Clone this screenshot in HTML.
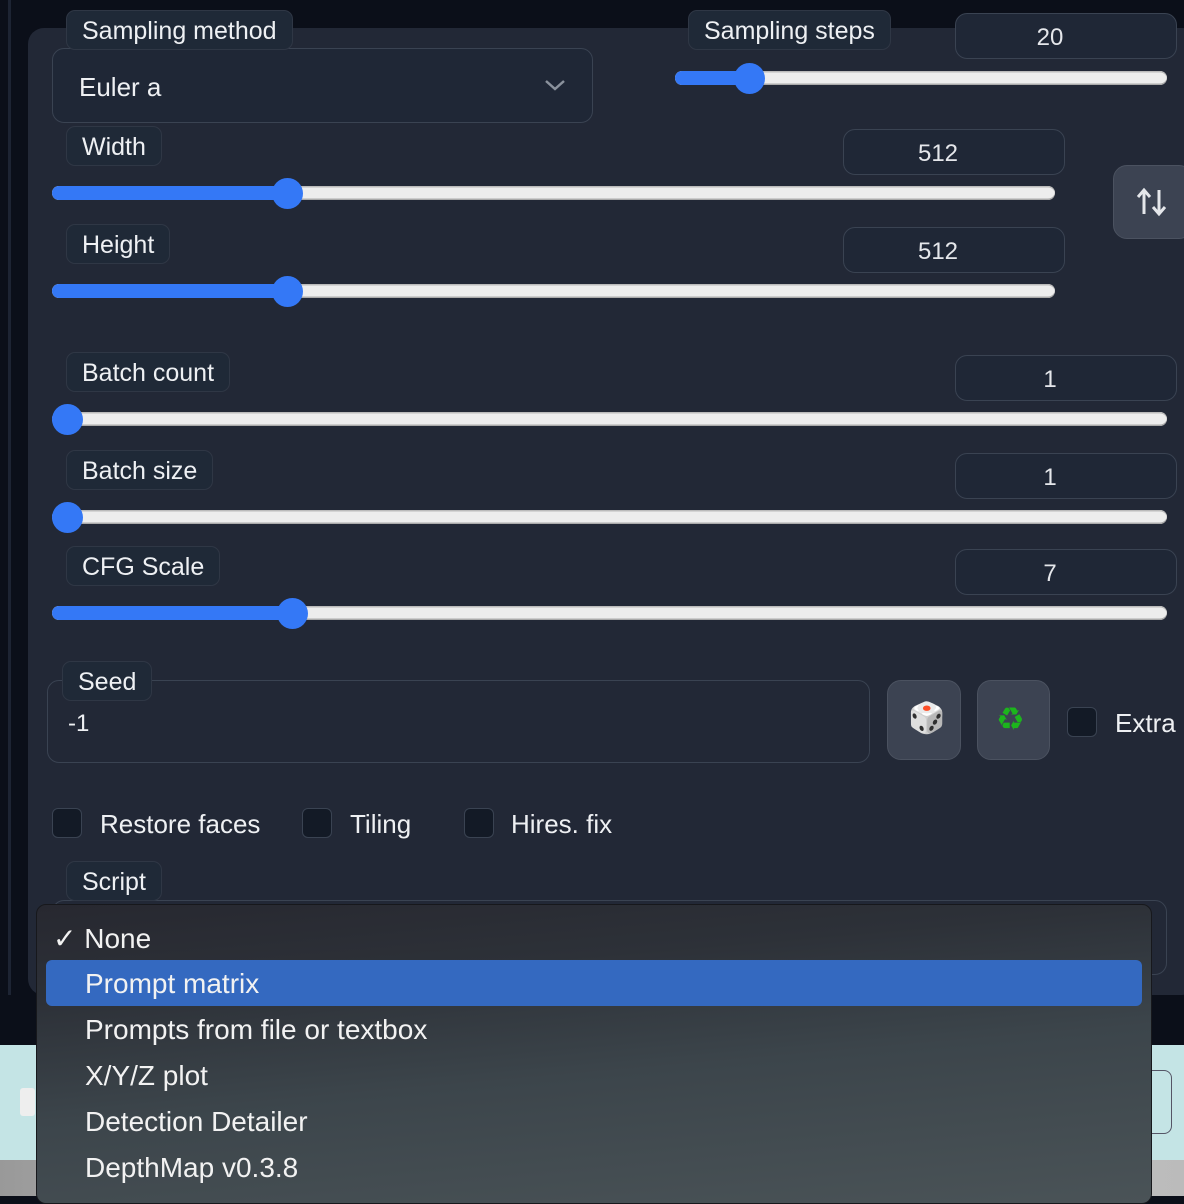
<!DOCTYPE html>
<html><head><meta charset="utf-8"><style>
*{box-sizing:border-box;margin:0;padding:0}
body{width:1184px;height:1196px;overflow:hidden;background:#0b0f19;font-family:"Liberation Sans","DejaVu Sans",sans-serif;color:#e5e7eb;position:relative}
.a{position:absolute}
.panel{left:28px;top:28px;width:1170px;height:967px;background:#222836;border-radius:16px}
.lbl{position:absolute;height:40px;background:#1f2937;border:1.5px solid #2f3745;border-radius:9px;font-size:25px;line-height:40px;padding:0 15px;color:#eef0f3;z-index:2}
.box{position:absolute;border:1.5px solid #3a4352;border-radius:12px;background:#1f2736}
.num{position:absolute;height:46px;border:1.5px solid #3a4352;border-radius:12px;background:#1f2736;text-align:center;font-size:24px;line-height:48px;padding-right:32px}
.tr{position:absolute;height:14px;background:#ededed;border-radius:7px;box-shadow:inset 0 -1.5px 0 #aaa,inset 0 1.5px 0 #bbb}
.fill{position:absolute;left:0;top:0;height:14px;background:#3478f6;border-radius:7px}
.th{position:absolute;width:31px;height:31px;border-radius:50%;background:#3478f6;top:-8.5px}
.cb{position:absolute;width:30px;height:30px;border:1.5px solid #3a4352;border-radius:6px;background:#131a26}
.t{position:absolute;font-size:26px;color:#eef0f3}
.btn{position:absolute;border:1.5px solid #4b5260;border-radius:14px;background:#3c4352}
.menu{left:36px;top:904px;width:1116px;height:300px;border-radius:10px;border:1.5px solid #17181c;background:linear-gradient(175deg,#272830 0%,#2d3138 25%,#3c454b 55%,#4a5357 100%);z-index:5}
.mi{position:absolute;left:48px;font-size:28px;color:#f2f2f2}
</style></head><body>
<div class="a" style="left:8px;top:0;width:3px;height:1045px;background:#1d2433"></div>
<div class="a panel"></div>
<div class="a" style="left:0;top:995px;width:1184px;height:50px;background:#0b0f19"></div>
<div class="a" style="left:0;top:1045px;width:1184px;height:115px;background:#c4e4e5"></div>
<div class="a" style="left:20px;top:1088px;width:15px;height:28px;background:#eee;border-radius:3px"></div>
<div class="a" style="left:1120px;top:1070px;width:52px;height:64px;border:1.5px solid #556;border-radius:8px"></div>
<div class="a" style="left:0;top:1160px;width:1184px;height:36px;background:linear-gradient(90deg,#999,#ccc 40%,#bbb)"></div>

<div class="lbl" style="left:66px;top:10px">Sampling method</div>
<div class="box" style="left:52px;top:48px;width:541px;height:75px"></div>
<div class="t" style="left:79px;top:72px;font-size:26px">Euler a</div>
<svg class="a" style="left:544px;top:78px" width="22" height="14"><path d="M2 3l9 8 9-8" stroke="#8a919c" stroke-width="2.5" fill="none"/></svg>

<div class="lbl" style="left:688px;top:10px">Sampling steps</div>
<div class="num" style="left:955px;top:13px;width:222px">20</div>
<div class="tr" style="left:675px;top:71px;width:492px"><div class="fill" style="width:74px"></div><div class="th" style="left:59px"></div></div>

<div class="lbl" style="left:66px;top:126px">Width</div>
<div class="num" style="left:843px;top:129px;width:222px">512</div>
<div class="tr" style="left:52px;top:186px;width:1003px"><div class="fill" style="width:235px"></div><div class="th" style="left:220px"></div></div>
<div class="btn" style="left:1113px;top:165px;width:80px;height:74px"></div>
<svg class="a" style="left:1136px;top:187px" width="32" height="30"><path d="M8 27V4M2 10l6-7 6 7M23 3v23M17 20l6 7 6-7" stroke="#e5e7eb" stroke-width="3" fill="none"/></svg>

<div class="lbl" style="left:66px;top:224px">Height</div>
<div class="num" style="left:843px;top:227px;width:222px">512</div>
<div class="tr" style="left:52px;top:284px;width:1003px"><div class="fill" style="width:235px"></div><div class="th" style="left:220px"></div></div>

<div class="lbl" style="left:66px;top:352px">Batch count</div>
<div class="num" style="left:955px;top:355px;width:222px">1</div>
<div class="tr" style="left:52px;top:412px;width:1115px"><div class="fill" style="width:16px"></div><div class="th" style="left:0"></div></div>

<div class="lbl" style="left:66px;top:450px">Batch size</div>
<div class="num" style="left:955px;top:453px;width:222px">1</div>
<div class="tr" style="left:52px;top:510px;width:1115px"><div class="fill" style="width:16px"></div><div class="th" style="left:0"></div></div>

<div class="lbl" style="left:66px;top:546px">CFG Scale</div>
<div class="num" style="left:955px;top:549px;width:222px">7</div>
<div class="tr" style="left:52px;top:606px;width:1115px"><div class="fill" style="width:240px"></div><div class="th" style="left:225px"></div></div>

<div class="box" style="left:47px;top:680px;width:823px;height:83px;background:#222836"></div>
<div class="lbl" style="left:62px;top:661px">Seed</div>
<div class="t" style="left:68px;top:710px;font-size:24px">-1</div>
<div class="btn" style="left:887px;top:680px;width:74px;height:80px"></div>
<div class="a" style="left:908px;top:702px;font-size:30px;line-height:34px">🎲</div>
<div class="btn" style="left:977px;top:680px;width:73px;height:80px"></div>
<div class="a" style="left:996px;top:702px;font-size:32px;line-height:34px;color:#1cb51c">♻</div>
<div class="cb" style="left:1067px;top:707px"></div>
<div class="t" style="left:1115px;top:708px">Extra</div>

<div class="cb" style="left:52px;top:808px"></div><div class="t" style="left:100px;top:809px">Restore faces</div>
<div class="cb" style="left:302px;top:808px"></div><div class="t" style="left:350px;top:809px">Tiling</div>
<div class="cb" style="left:464px;top:808px"></div><div class="t" style="left:511px;top:809px">Hires. fix</div>

<div class="lbl" style="left:66px;top:861px">Script</div>
<div class="box" style="left:52px;top:900px;width:1115px;height:75px;background:#222836"></div>

<div class="a menu">
<div class="mi" style="left:16px;top:17px">✓ None</div>
<div class="a" style="left:9px;top:55px;width:1096px;height:46px;background:#3469c0;border-radius:6px"></div>
<div class="mi" style="top:63px">Prompt matrix</div>
<div class="mi" style="top:109px">Prompts from file or textbox</div>
<div class="mi" style="top:155px">X/Y/Z plot</div>
<div class="mi" style="top:201px">Detection Detailer</div>
<div class="mi" style="top:247px">DepthMap v0.3.8</div>
</div>
</body></html>
